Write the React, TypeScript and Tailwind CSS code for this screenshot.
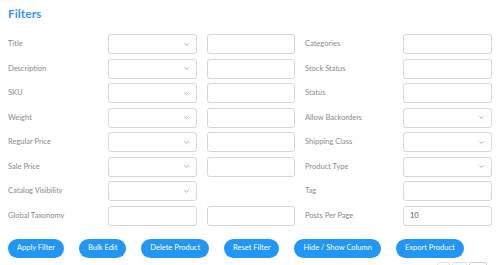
import { ChevronDown } from 'lucide-react';

type Field = 'select' | 'input' | 'none';

const leftRows: { label: string; a: Field; b: Field }[] = [
  { label: 'Title', a: 'select', b: 'input' },
  { label: 'Description', a: 'select', b: 'input' },
  { label: 'SKU', a: 'select', b: 'input' },
  { label: 'Weight', a: 'select', b: 'input' },
  { label: 'Regular Price', a: 'select', b: 'input' },
  { label: 'Sale Price', a: 'select', b: 'input' },
  { label: 'Catalog Visibility', a: 'select', b: 'none' },
  { label: 'Global Taxonomy', a: 'input', b: 'input' },
];

const rightRows: { label: string; f: Field; value?: string }[] = [
  { label: 'Categories', f: 'input' },
  { label: 'Stock Status', f: 'input' },
  { label: 'Status', f: 'input' },
  { label: 'Allow Backorders', f: 'select' },
  { label: 'Shipping Class', f: 'select' },
  { label: 'Product Type', f: 'select' },
  { label: 'Tag', f: 'input' },
  { label: 'Posts Per Page', f: 'input', value: '10' },
];

const buttons = ['Apply Filter', 'Bulk Edit', 'Delete Product', 'Reset Filter', 'Hide / Show Column', 'Export Product'];

function Control({ kind, value }: { kind: Field; value?: string }) {
  if (kind === 'none') return <div />;
  return (
    <div className="h-[20px] rounded-[3px] border border-[#d6d6d6] bg-white flex items-center justify-between px-[6px] text-[7.5px] text-[#555]">
      <span>{value}</span>
      {kind === 'select' && <ChevronDown className="w-[7px] h-[7px] text-[#888]" strokeWidth={2.5} />}
    </div>
  );
}

export default function App() {
  return (
    <div className="w-[500px] h-[265px] bg-white overflow-hidden px-[8px] pt-[6px]" style={{ fontFamily: 'Lato, "Liberation Sans", sans-serif' }}>
      <h2 className="text-[12px] leading-[16px] font-bold text-[#3a95ee]">Filters</h2>

      <div className="mt-[12px] grid grid-cols-[90px_89px_88px_88px_89px] gap-x-[10px] gap-y-[4.5px]">
        {leftRows.map((row, i) => (
          <div key={row.label} className="contents">
            <div className="flex items-center text-[7.5px] text-[#8a8a8a]">{row.label}</div>
            <Control kind={row.a} />
            <Control kind={row.b} />
            <div className="flex items-center text-[7.5px] text-[#8a8a8a]">{rightRows[i].label}</div>
            <Control kind={rightRows[i].f} value={rightRows[i].value} />
          </div>
        ))}
      </div>

      <div className="mt-[13px] flex gap-[15px]">
        {buttons.map((b) => (
          <button
            key={b}
            className="h-[19px] px-[9px] rounded-full bg-[#2196f3] text-white text-[7.5px] font-normal leading-none"
          >
            {b}
          </button>
        ))}
      </div>

      <div className="mt-[4px] flex justify-end gap-[2px] pr-[5px]">
        <div className="w-[13px] h-[12px] rounded-[2px] border border-[#e2e2e2]" />
        <div className="w-[15px] h-[12px] rounded-[2px] border border-[#e2e2e2]" />
        <div className="w-[18px] h-[12px] rounded-[2px] border border-[#cfcfcf]" />
      </div>
    </div>
  );
}
